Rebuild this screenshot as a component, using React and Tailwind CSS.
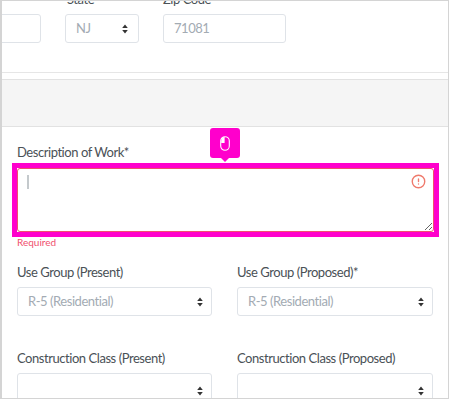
import React from 'react';
import { CircleAlert } from 'lucide-react';

function UpDown({ className }) {
  return (
    <svg width="6" height="10" viewBox="0 0 6 10" className={className}>
      <path d="M3 .5 5.8 4H.2z M3 9.5 .2 6h5.6z" fill="#333" />
    </svg>
  );
}

function MouseGlyph() {
  return (
    <svg width="10" height="15" viewBox="0 0 10 15">
      <rect x=".7" y=".7" width="8.6" height="13.6" rx="4.3" fill="none" stroke="#fff" strokeWidth="1.1" />
      <path d="M4.6 1C2.6 1.2 1.2 2.6 1.2 5v2h3.4z" fill="#fff" />
    </svg>
  );
}

function SelectBox({ value, className }) {
  return (
    <div className={`flex items-center justify-between border border-[#dfe3e8] rounded-[3px] bg-white text-[13px] tracking-[-0.45px] text-[#a3abb3] ${className}`}>
      <span>{value}</span>
      <UpDown />
    </div>
  );
}

function Field({ label, value, height }) {
  return (
    <div>
      <p className="text-[13px] leading-[16px] tracking-[-0.45px] text-[#4a5156] mb-[7px]">{label}</p>
      <SelectBox value={value} className={`${height} pl-[10px] pr-[8px]`} />
    </div>
  );
}

export default function App() {
  return (
    <div className="w-[450px] h-[400px] overflow-hidden bg-white font-['Lato',sans-serif]">
      <div className="w-[449px] h-[399px] overflow-hidden border-l-[2px] border-t-[1px] border-r-[1px] border-b-[1px] border-[#d4d4d4]">
        <div className="flex items-end h-[42px] -ml-[20px]">
          <div className="w-[59px] h-[29px] border border-[#dfe3e8] rounded-[3px]" />
          <div className="w-[74px] ml-[24px] relative">
            <p className="absolute -top-[23px] left-[2px] text-[13px] leading-[16px] tracking-[-0.45px] text-[#4a5156]">State</p>
            <SelectBox value="NJ" className="h-[29px] pl-[10px] pr-[10px]" />
          </div>
          <div className="w-[123px] ml-[24px] relative">
            <p className="absolute -top-[23px] left-[0px] text-[13px] leading-[16px] tracking-[-0.45px] text-[#4a5156]">Zip Code</p>
            <div className="h-[29px] flex items-center pl-[10px] border border-[#dfe3e8] rounded-[3px] text-[13px] tracking-[-0.45px] text-[#a3abb3]">71081</div>
          </div>
        </div>

        <div className="mt-[29px] border-t border-[#e6e6e6]" />
        <div className="mt-[6px] h-[48px] bg-[#f5f5f5] border-y border-[#e2e2e2]" />

        <div className="pl-[15px] pr-[14px] pt-[17px]">
          <p className="text-[13px] leading-[16px] tracking-[-0.45px] text-[#4a5156] mb-[8px]">Description of Work*</p>
          <div className="relative h-[64px]">
            <textarea className="block w-full h-full resize-y border border-[#f0506e] rounded-[3px] bg-white outline-none" />
            <span className="absolute left-[10px] top-[7px] w-[2px] h-[14px] bg-[#c4c9cc]" />
            <CircleAlert size={15} strokeWidth={2.2} className="absolute right-[8px] top-[6px] text-[#ef7a6c]" />
            <div className="absolute -inset-[5px] border-[5px] border-[#ff00cc] pointer-events-none" />
            <div className="absolute left-[193px] -top-[40px] w-[30px] h-[30px] rounded-[3px] bg-[#ff00cc] flex items-center justify-center">
              <MouseGlyph />
              <span className="absolute left-[11px] -bottom-[4px] w-0 h-0 border-x-[4px] border-x-transparent border-t-[4px] border-t-[#ff00cc]" />
            </div>
          </div>
          <p className="mt-[4px] text-[10px] leading-[12px] text-[#f0506e]">Required</p>

          <div className="mt-[16px] grid grid-cols-[195px_196px] gap-x-[25px] gap-y-[34px]">
            <Field label="Use Group (Present)" value="R-5 (Residential)" height="h-[29px]" />
            <Field label="Use Group (Proposed)*" value="R-5 (Residential)" height="h-[29px]" />
            <Field label="Construction Class (Present)" value="" height="h-[36px]" />
            <Field label="Construction Class (Proposed)" value="" height="h-[36px]" />
          </div>
        </div>
      </div>
    </div>
  );
}
